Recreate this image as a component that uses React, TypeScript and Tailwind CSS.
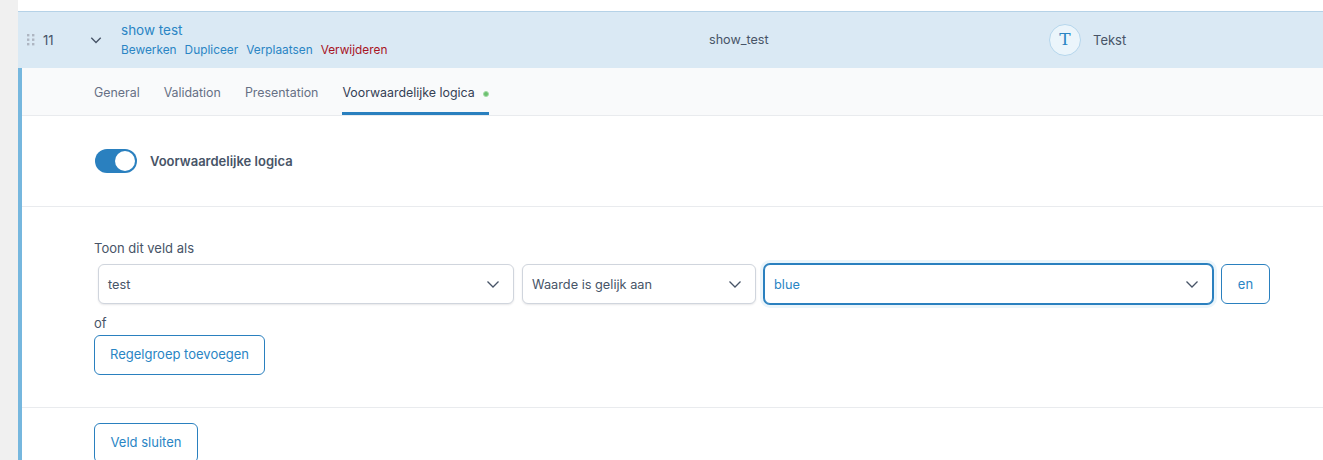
import React from "react";

const Chevron = ({ className = "", size = 14 }: { className?: string; size?: number }) => (
  <svg width={size} height={size} viewBox="0 0 14 14" fill="none" stroke="#475467" strokeWidth={size < 14 ? 1.6 : 1.3} className={className}>
    <path d="M1.5 4.5 7 10l5.5-5.5" />
  </svg>
);

const Select = ({ label, className = "" }: { label: string; className?: string }) => (
  <div className={`h-10 flex items-center justify-between pl-[9px] pr-[13px] bg-white rounded-md border border-[#d0d5dd] shadow-[0_1px_2px_rgba(16,24,40,0.1)] text-[12.75px] text-[#475467] ${className}`}>
    <span className="mt-px">{label}</span>
    <Chevron />
  </div>
);

export default function App() {
  return (
    <div className="h-[460px] overflow-hidden flex bg-white text-[12.4px] text-[#475467] font-['Inter',sans-serif]">
      <div className="w-[18px] shrink-0 bg-[#f0f0f0]" />
      <div className="flex-1 min-w-0">
        <div className="h-[11px] bg-white" />
        <div className="h-[57px] flex items-center bg-[#dae9f4] border-t border-[#b5d2e7]">
          <div className="w-[103px] shrink-0 flex items-center">
            <svg width="10" height="14" viewBox="0 0 10 14" fill="#aeb6c2" className="ml-[9px]">
              <rect x="0" y="1" width="2.4" height="2.4" />
              <rect x="5" y="1" width="2.4" height="2.4" />
              <rect x="0" y="5.5" width="2.4" height="2.4" />
              <rect x="5" y="5.5" width="2.4" height="2.4" />
              <rect x="0" y="10" width="2.4" height="2.4" />
              <rect x="5" y="10" width="2.4" height="2.4" />
            </svg>
            <span className="ml-[6px] mt-px text-[13px]">11</span>
            <Chevron size={12} className="ml-[36px]" />
          </div>
          <div className="w-[588px] shrink-0 -mt-px">
            <div className="text-[13.5px] leading-[18px] text-[#2a85c4]">show test</div>
            <div className="flex gap-2 mt-[3px] leading-[16px] text-[11.85px] text-[#2a85c4]">
              <span>Bewerken</span>
              <span>Dupliceer</span>
              <span>Verplaatsen</span>
              <span className="text-[#a8141f]">Verwijderen</span>
            </div>
          </div>
          <div className="w-[340px] shrink-0 mt-px text-[12.6px] text-[#475467]">show_test</div>
          <div className="w-8 h-8 rounded-full bg-[#ebf5fb] border border-[#b5d6ec] flex items-center justify-center text-[17px] text-[#2a85c4] font-['DejaVu_Serif',serif]">T</div>
          <span className="ml-3 mt-[2px] text-[13px] text-[#475467]">Tekst</span>
        </div>
        <div className="border-l-4 border-[#76b7de]">
          <div className="h-[48px] flex gap-6 pl-[72px] bg-[#f9fafb] border-b border-[#e9ebee]">
            <div className="h-[47px] flex items-center pt-[4px] text-[#667085]">General</div>
            <div className="h-[47px] flex items-center pt-[4px] text-[#667085]">Validation</div>
            <div className="h-[47px] flex items-center pt-[4px] text-[#667085]">Presentation</div>
            <div className="h-[47px] flex items-center gap-2 border-b-[3px] border-[#2a80bf] pt-[7px] text-[#344054]">
              <span>Voorwaardelijke logica</span>
              <span className="w-[6px] h-[6px] rounded-full bg-[#6cc070] border border-[#a4dca6]" />
            </div>
          </div>
          <div className="h-[91px] flex items-center gap-[13px] pl-[73px] border-b border-[#e9ebee]">
            <div className="w-[42px] h-6 rounded-full bg-[#2a80bf] flex items-center justify-end pr-[2px]">
              <div className="w-5 h-5 rounded-full bg-white" />
            </div>
            <span className="font-semibold mt-[2px] text-[13px] text-[#475467]">Voorwaardelijke logica</span>
          </div>
          <div className="h-[201px] pl-[72px] pt-[33px] border-b border-[#e9ebee] text-[13px]">
            <div className="leading-[16px] text-[#475467]">Toon dit veld als</div>
            <div className="flex gap-2 mt-[8px] ml-1">
              <Select label="test" className="w-[416px]" />
              <Select label="Waarde is gelijk aan" className="w-[234px]" />
              <div className="w-[449px] h-10 flex items-center justify-between pl-[9px] pr-[13px] bg-white rounded-md border border-[#2a80bf] shadow-[0_0_0_1px_#2a80bf,0_0_0_4px_#ebf5fb] text-[12.75px] text-[#2a85c4]">
                <span className="mt-px">blue</span>
                <Chevron />
              </div>
              <button className="w-[49px] h-10 pt-px rounded-md border border-[#2a80bf] bg-white text-[#2a85c4]">en</button>
            </div>
            <div className="mt-[11px] leading-[16px] text-[#475467]">of</div>
            <button className="mt-[4px] w-[171px] h-10 rounded-md border border-[#2a80bf] bg-white text-[#2a85c4]">Regelgroep toevoegen</button>
          </div>
          <div className="pl-[72px] pt-[15px]">
            <button className="w-[104px] h-10 rounded-md border border-[#2a80bf] bg-white text-[13px] text-[#2a85c4]">Veld sluiten</button>
          </div>
        </div>
      </div>
    </div>
  );
}
